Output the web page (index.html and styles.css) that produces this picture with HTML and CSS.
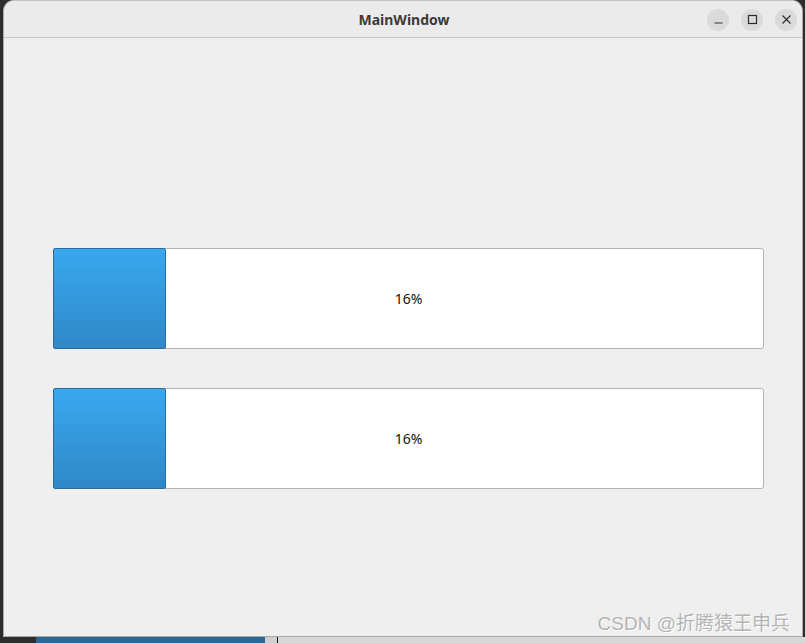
FILE: index.html
```html
<!DOCTYPE html>
<html lang="zh-CN">
<head>
    <meta charset="UTF-8">
    <title>MainWindow</title>
    <link rel="stylesheet" href="styles.css">
</head>
<body>
    <div class="desktop">
        <div class="window">
            <header class="titlebar">
                <span class="title">MainWindow</span>
                <div class="controls">
                    <span class="ctl">
                        <svg width="11" height="11" viewBox="0 0 11 11"><path d="M1.5 9h8" stroke="#2e2e2e" stroke-width="1.2"/></svg>
                    </span>
                    <span class="ctl">
                        <svg width="11" height="11" viewBox="0 0 11 11"><rect x="1.5" y="1.5" width="8" height="8" fill="none" stroke="#2e2e2e" stroke-width="1.2"/></svg>
                    </span>
                    <span class="ctl">
                        <svg width="11" height="11" viewBox="0 0 11 11"><path d="M1.5 1.5l8 8M9.5 1.5l-8 8" stroke="#2e2e2e" stroke-width="1.2"/></svg>
                    </span>
                </div>
            </header>

            <main class="content">
                <div class="bar">
                    <div class="chunk" style="width: 16%;"></div>
                    <span class="label">16%</span>
                </div>
                <div class="bar">
                    <div class="chunk" style="width: 16%;"></div>
                    <span class="label">16%</span>
                </div>
                <div class="watermark">CSDN @折腾猿王申兵</div>
            </main>
        </div>

        <!-- bits of the desktop below the window -->
        <div class="taskbar">
            <span class="tb-dark"></span>
            <span class="tb-blue"></span>
            <span class="tb-grey"></span>
            <span class="tb-light"></span>
        </div>
    </div>
</body>
</html>
```

FILE: styles.css
```css
* {
    margin: 0;
    padding: 0;
    box-sizing: border-box;
}

body {
    width: 805px;
    height: 643px;
    overflow: hidden;
    background: #2d2d2d;
    font-family: 'Noto Sans', 'DejaVu Sans', sans-serif;
}

.desktop {
    display: flex;
    flex-direction: column;
    height: 643px;
}

.window {
    margin-left: 3px;
    width: 800px;
    height: 637px;
    background: #efefef;
    border: 1px solid #a9a9a9;
    border-top-color: #c4c4c4;
    border-radius: 11px 11px 0 0;
    display: flex;
    flex-direction: column;
    overflow: hidden;
}

.titlebar {
    height: 37px;
    flex-shrink: 0;
    background: #ebebeb;
    border-bottom: 1px solid #c9c9c9;
    display: grid;
    grid-template-columns: 1fr;
    align-items: center;
}

.title {
    grid-area: 1 / 1;
    text-align: center;
    font-size: 14px;
    font-weight: bold;
    color: #3a3a3a;
    padding-left: 2px;
}

.controls {
    grid-area: 1 / 1;
    justify-self: end;
    display: flex;
    gap: 12px;
    padding-right: 5px;
    margin-top: 1px;
}

.ctl {
    width: 22px;
    height: 22px;
    border-radius: 50%;
    background: #dadada;
    display: flex;
    align-items: center;
    justify-content: center;
}

.content {
    flex: 1;
    display: flex;
    flex-direction: column;
    gap: 39px;
    padding: 210px 38px 0 49px;
}

.bar {
    height: 101px;
    background: #ffffff;
    border: 1px solid #b3b3b3;
    border-radius: 3px;
    display: grid;
    grid-template-columns: 1fr;
    grid-template-rows: 1fr;
    align-items: center;
}

.chunk {
    grid-area: 1 / 1;
    height: 101px;
    margin: -1px 0 0 -1px;
    background: linear-gradient(#39a8ef, #2f88c7);
    border: 1px solid #2a6c9e;
    border-radius: 2px;
}

.label {
    grid-area: 1 / 1;
    text-align: center;
    font-size: 14px;
    color: #111;
    margin-top: -1px;
}

.watermark {
    margin-top: auto;
    align-self: flex-end;
    margin-right: -26px;
    margin-bottom: 1px;
    font-family: 'Liberation Sans', 'Noto Sans CJK SC', sans-serif;
    font-size: 19px;
    color: #b4b4b4;
    text-shadow: 1px 1px 0 #ffffff;
}

.taskbar {
    height: 6px;
    display: flex;
}

.tb-dark {
    width: 36px;
    background: #2d2d2d;
}

.tb-blue {
    width: 229px;
    background: #2a6897;
}

.tb-grey {
    width: 13px;
    background: #d0d0d0;
    border-right: 1px solid #111;
}

.tb-light {
    flex: 1;
    background: #d8d8d8;
}
```
